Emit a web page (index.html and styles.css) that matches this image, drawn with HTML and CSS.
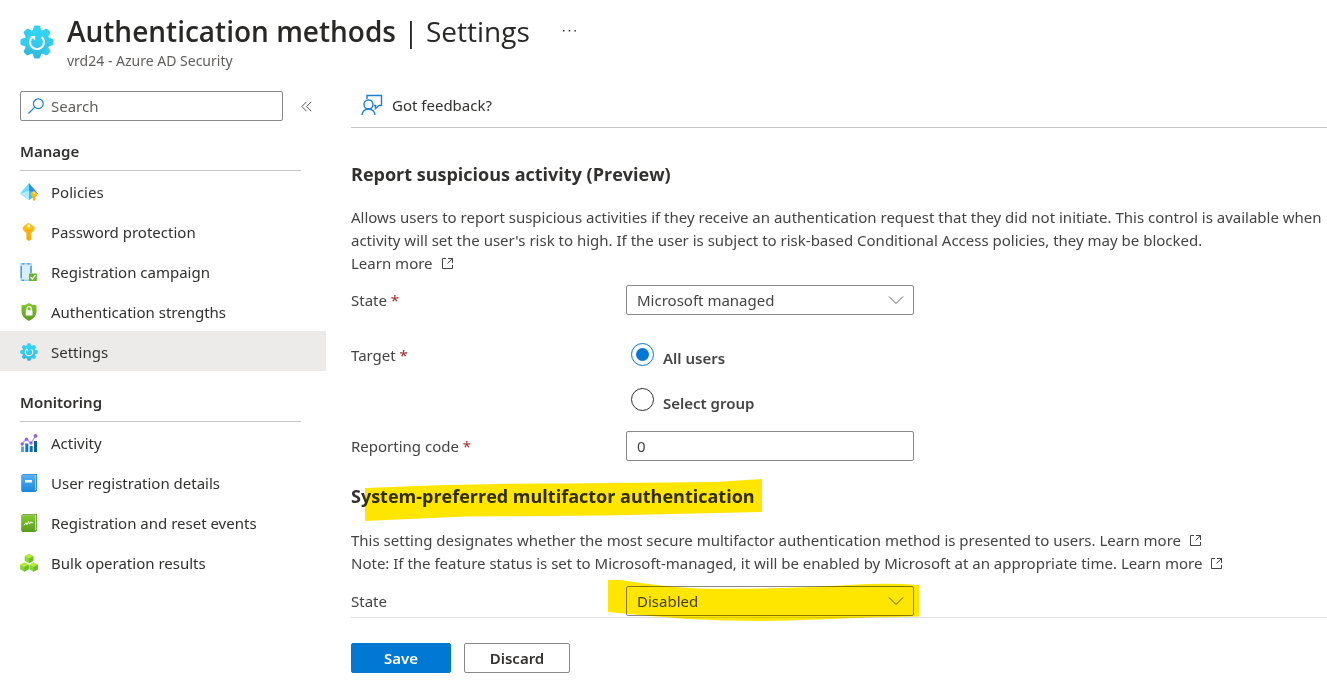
FILE: index.html
```html
<!DOCTYPE html>
<html lang="en">
<head>
<meta charset="utf-8">
<title>Authentication methods | Settings</title>
<link rel="stylesheet" href="styles.css">
</head>
<body>
<svg class="defs" aria-hidden="true">
  <defs>
    <linearGradient id="cyan" x1="0" y1="0" x2="0" y2="1"><stop offset="0" stop-color="#32d4f5"/><stop offset=".5" stop-color="#32cdf0"/><stop offset="1" stop-color="#2fb9dc"/></linearGradient>
    <linearGradient id="gold" x1="0" y1="0" x2="0" y2="1"><stop offset="0" stop-color="#ffc61a"/><stop offset="1" stop-color="#f9a80c"/></linearGradient>
    <linearGradient id="blue" x1="0" y1="0" x2="0" y2="1"><stop offset="0" stop-color="#4fb0f3"/><stop offset="1" stop-color="#1b86dc"/></linearGradient>
    <linearGradient id="green" x1="0" y1="0" x2="0" y2="1"><stop offset="0" stop-color="#83c92e"/><stop offset="1" stop-color="#5b9a20"/></linearGradient>
    <symbol id="gear" viewBox="0 0 34 34">
      <g fill="url(#cyan)">
        <circle cx="17" cy="17" r="12.6"/>
        <path id="teeth" d="M12.600 6 13.800 1.600Q14.200.5 15.200.5H18.800Q19.800.5 20.200 1.600L21.400 6ZM12.600 28 13.800 32.400Q14.200 33.500 15.200 33.500H18.800Q19.800 33.500 20.200 32.400L21.400 28ZM6 12.600 1.600 13.800Q.5 14.200.5 15.200V18.800Q.5 19.800 1.600 20.200L6 21.400ZM28 12.600 32.400 13.800Q33.500 14.200 33.500 15.200V18.800Q33.500 19.800 32.400 20.200L28 21.400Z"/>
        <use href="#teeth" transform="rotate(45 17 17)"/>
      </g>
      <path d="M12.300 12A7 7 0 1 0 21.700 12" fill="none" stroke="#fff" stroke-width="2"/>
      <path d="M10.400 11H15.200V15.600Z" fill="#fff"/>
    </symbol>
    <symbol id="external" viewBox="0 0 13 13">
      <path d="M5 1.5H1.5V11.5H11.5V8M7 1.5H11.5V6M11.5 1.5 6.500 6.500" fill="none" stroke="#444" stroke-width="1"/>
    </symbol>
    <symbol id="chevron" viewBox="0 0 16 10">
      <path d="M1 1.5 8 8.5 15 1.5" fill="none" stroke="#605e5c" stroke-width="1"/>
    </symbol>
  </defs>
</svg>

<header class="page-header">
  <svg class="page-icon" aria-hidden="true"><use href="#gear"/></svg>
  <div>
    <div class="title-row">
      <h1 class="title">Authentication methods<span class="title-section"> | Settings</span></h1>
      <button class="more" type="button" aria-label="More actions"><svg width="15" height="4" viewBox="0 0 15 4" aria-hidden="true"><path d="M1 1h1.500v1.500H1zM6.700 1h1.500v1.500h-1.500zM12.400 1h1.500v1.500h-1.500z" fill="#323130"/></svg></button>
    </div>
    <p class="subtitle">vrd24 - Azure AD Security</p>
  </div>
</header>

<div class="layout">
  <aside class="sidebar">
    <div class="search-row">
      <div class="search">
        <svg width="16" height="16" viewBox="0 0 16 16" aria-hidden="true"><g fill="none" stroke="#1a7fd6" stroke-width="1.200"><circle cx="10.300" cy="5.700" r="4.900"/><path d="M6.800 9.200.5 15.500"/></g></svg>
        <input class="search-input" type="search" placeholder="Search" aria-label="Search">
      </div>
      <button class="collapse" type="button" aria-label="Collapse menu"><svg width="11" height="11" viewBox="0 0 11 11" aria-hidden="true"><path d="M5.500.8.900 5.500l4.600 4.700M10.200.8 5.600 5.500l4.600 4.700" fill="none" stroke="#555" stroke-width="1"/></svg></button>
    </div>
    <nav>
      <h2 class="nav-heading">Manage</h2>
      <ul class="nav-list">
        <li><a class="nav-item" href="#"><svg class="nav-icon" viewBox="0 0 18 18" aria-hidden="true"><path d="M9 0 0 10.500 9 17z" fill="#6fdcf8"/><path d="M9 0 18 10.500 9 17z" fill="#2f8fdc"/><path d="M0 10.500 9 8v9z" fill="#a9effc"/><path d="M9 8 18 10.500 9 17z" fill="#4bb9ef"/><path d="M13.700 7.800 17 10.200v2.300l-1.600 1.700v2.600l-1.300 1.200-1.400-1.200v-2.600L11 12.500v-2.300z" fill="url(#gold)"/><circle cx="14" cy="10" r=".8" fill="#fff"/></svg>Policies</a></li>
        <li><a class="nav-item" href="#"><svg class="nav-icon" viewBox="0 0 18 18" aria-hidden="true"><path d="M7 .4Q8.500-.4 10 .4L14 3.400Q14.900 4.300 14.700 5.500L14 7.600 11.200 10.300V16.500L8.900 18 6.400 16.200V10.300L3.400 7.600 2.700 5.500Q2.500 4.300 3.300 3.400Z" fill="url(#gold)"/><circle cx="8.700" cy="2.900" r="1.500" fill="#fff"/><path d="M5.500 7.500h6.400M7.700 10v6" stroke="#f0a000" stroke-width=".7"/></svg>Password protection</a></li>
        <li><a class="nav-item" href="#"><svg class="nav-icon" viewBox="0 0 18 18" aria-hidden="true"><path d="M.7.500H11.500V17.500H.7z" fill="#d9eefb"/><path d="M1.200 0v18M11 0v10M1 .700h10M1 17.300h8" fill="none" stroke="#a5cff2" stroke-width="1.400"/><path d="M1.200 3v12M11 3v7M2.300.800h2M7.500.800h2M2 17.300h2" stroke="#3c94df" stroke-width="1.300"/><path d="M9 10.500h7.800V18H9z" fill="#66b32e"/><path d="m10.500 14.200 1.800 1.800 3.200-3.800" fill="none" stroke="#fff" stroke-width="1.200"/></svg>Registration campaign</a></li>
        <li><a class="nav-item" href="#"><svg class="nav-icon" viewBox="0 0 18 18" aria-hidden="true"><path d="M9 0Q12 2.200 16.500 2.200V9Q16.500 14 9 18 1.500 14 1.500 9V2.200Q6 2.200 9 0Z" fill="url(#green)"/><path d="M7 7.500V5.800a2.100 2.100 0 0 1 4.200 0v1.700" fill="none" stroke="#fff" stroke-width="1.300"/><rect x="5.700" y="7.300" width="6.800" height="5.200" rx=".6" fill="#fff"/></svg>Authentication strengths</a></li>
        <li><a class="nav-item selected" href="#" aria-current="page"><svg class="nav-icon" aria-hidden="true"><use href="#gear"/></svg>Settings</a></li>
      </ul>
      <h2 class="nav-heading">Monitoring</h2>
      <ul class="nav-list">
        <li><a class="nav-item" href="#"><svg class="nav-icon" viewBox="0 0 18 18" aria-hidden="true"><path d="M1 12.500h3V18H1z" fill="#5ea0ef"/><path d="M5.300 9.500h3V18h-3z" fill="#0078d4"/><path d="M9.700 12h3v6h-3z" fill="#1469b0"/><path d="M14 7h3v11h-3z" fill="#0b5f9f"/><path d="M2 10 6.300 5.200 11 9 15.500 2" fill="none" stroke="#b796f9" stroke-width="1.200"/><g fill="#9560e4"><circle cx="2.200" cy="10" r="1.700"/><circle cx="6.500" cy="5.200" r="1.700"/><circle cx="11" cy="9" r="1.700"/><circle cx="15.500" cy="1.900" r="1.900"/></g></svg>Activity</a></li>
        <li><a class="nav-item" href="#"><svg class="nav-icon" viewBox="0 0 18 18" aria-hidden="true"><path d="M3 0H17V16.500L15.300 18H2.500L1.500 17V1.500Z" fill="#1576cc"/><path d="M3 .8H16.200V15.800L15.200 16.700V1.500H2z" fill="#cce6fa"/><path d="M1.500 1.800h13.500V18H2.500l-1-1z" fill="url(#blue)"/><path d="M5 6h7v2.500H5z" fill="#fff"/></svg>User registration details</a></li>
        <li><a class="nav-item" href="#"><svg class="nav-icon" viewBox="0 0 18 18" aria-hidden="true"><path d="M3 0H17V16.500L15.300 18H2.500L1.500 17V1.500Z" fill="#5a9a22"/><path d="M3 .8H16.200V15.800L15.200 16.700V1.500H2z" fill="#d8efc0"/><path d="M1.500 1.800h13.500V18H2.500l-1-1z" fill="url(#green)"/><path d="M4 11.300 6 8.800 7 10.700 8.500 7.500 9.500 10 11 7.800 11.500 8.700H13" fill="none" stroke="#f2fbe8" stroke-width="1"/></svg>Registration and reset events</a></li>
        <li><a class="nav-item" href="#"><svg class="nav-icon" viewBox="0 0 18 18" aria-hidden="true"><g id="cube"><path d="M9 0 13.300 2.200V6.800L9 9.200 4.700 6.800V2.200Z" fill="#86d633"/><path d="M9 0 13.300 2.200 9 4.600 4.700 2.200Z" fill="#b4ec36"/><path d="M9 4.600 13.300 2.200V6.800L9 9.200Z" fill="#6dbb2a"/></g><use href="#cube" x="-4.600" y="8.500"/><use href="#cube" x="4.600" y="8.500"/></svg>Bulk operation results</a></li>
      </ul>
    </nav>
  </aside>

  <main class="content">
    <div class="toolbar">
      <button class="feedback" type="button">
        <svg width="22" height="22" viewBox="0 0 22 22" aria-hidden="true"><g fill="none" stroke="#1a7fd6" stroke-width="1.400"><circle cx="7.500" cy="10.500" r="4.500"/><path d="M1 21a6.500 6 0 0 1 13 0M6 5V1.500H20.500V11.500H18L14.500 14.500V11.500H12.800"/></g></svg>
        Got feedback?
      </button>
    </div>

    <form class="form">
      <section class="group">
        <h2 class="group-title">Report suspicious activity (Preview)</h2>
        <p class="description">Allows users to report suspicious activities if they receive an authentication request that they did not initiate. This control is available when<br>activity will set the user's risk to high. If the user is subject to risk-based Conditional Access policies, they may be blocked.<br><a class="learn" href="#">Learn more<svg class="external" aria-hidden="true"><use href="#external"/></svg></a></p>
        <div class="field">
          <label for="report-state">State <span class="required">*</span></label>
          <div class="select-box">
            <select id="report-state" class="control"><option>Microsoft managed</option></select>
            <svg class="chevron" aria-hidden="true"><use href="#chevron"/></svg>
          </div>
        </div>
        <div class="field target" role="radiogroup" aria-labelledby="target-label">
          <span id="target-label">Target <span class="required">*</span></span>
          <div class="radios">
            <label class="radio"><input type="radio" name="target" checked><span class="radio-text">All users</span></label>
            <label class="radio"><input type="radio" name="target"><span class="radio-text">Select group</span></label>
          </div>
        </div>
        <div class="field">
          <label for="code">Reporting code <span class="required">*</span></label>
          <input id="code" class="control" type="text" value="0">
        </div>
      </section>

      <section class="group preferred">
        <h2 class="group-title marked">System-preferred multifactor authentication
          <svg class="marker marker-title" viewBox="0 0 398 42" aria-hidden="true"><path d="M0 9Q100 4 200 4.500L350 3 397 0V33L240 36.500 100 37.500 0 42Z" fill="#ffe600"/></svg>
        </h2>
        <p class="description">This setting designates whether the most secure multifactor authentication method is presented to users. <a class="learn" href="#">Learn more<svg class="external" aria-hidden="true"><use href="#external"/></svg></a><br>Note: If the feature status is set to Microsoft-managed, it will be enabled by Microsoft at an appropriate time. <a class="learn" href="#">Learn more<svg class="external" aria-hidden="true"><use href="#external"/></svg></a></p>
        <div class="field">
          <label for="mfa-state">State</label>
          <div class="select-box">
            <select id="mfa-state" class="control"><option>Disabled</option></select>
            <svg class="chevron" aria-hidden="true"><use href="#chevron"/></svg>
            <svg class="marker marker-state" viewBox="0 0 311 42" aria-hidden="true"><path d="M0 0H12Q60 7 90 8.500 160 10 240 5 280 2.500 311 5V36.500Q260 37 210 39.500 150 42.500 80 39 40 36 0 32Z" fill="#ffe600"/></svg>
          </div>
        </div>
      </section>

      <footer class="actions">
        <button class="btn primary" type="submit">Save</button>
        <button class="btn secondary" type="button">Discard</button>
      </footer>
    </form>
  </main>
</div>
</body>
</html>
```

FILE: styles.css
```css
* {
  box-sizing: border-box;
}

body {
  margin: 0;
  background: #fff;
  color: #323130;
  font: 15px/20px "Noto Sans", "Open Sans", sans-serif;
}

h1, h2, p, ul {
  margin: 0;
  padding: 0;
}

ul {
  list-style: none;
}

a {
  color: inherit;
  text-decoration: none;
}

button, input, select {
  font: inherit;
  color: inherit;
}

.defs {
  position: absolute;
  width: 0;
  height: 0;
}

.page-header {
  display: flex;
  gap: 13px;
  padding: 11px 20px 20px;
}

.page-icon {
  width: 34px;
  height: 34px;
  margin-top: 14px;
}

.title-row {
  display: flex;
  align-items: center;
  gap: 26px;
}

.title {
  color: #292827;
  font-family: "Open Sans", "Noto Sans", sans-serif;
  font-size: 28px;
  line-height: 40px;
  font-weight: 600;
  white-space: nowrap;
}

.title-section {
  font-weight: 400;
}

.more, .collapse, .feedback {
  display: flex;
  align-items: center;
  border: 0;
  background: none;
}

.subtitle {
  color: #605e5c;
  font-size: 14px;
}

.layout {
  display: grid;
  grid-template-columns: 326px minmax(0, 1fr);
}

.search-row {
  display: flex;
  align-items: center;
  gap: 12px;
  padding-left: 20px;
}

.search {
  display: flex;
  align-items: center;
  gap: 7px;
  width: 263px;
  height: 30px;
  padding: 0 7px;
  border: 1px solid #8a8886;
  border-radius: 2px;
}

.search-input {
  flex: 1;
  min-width: 0;
  padding: 0;
  border: 0;
  outline: 0;
  background: none;
}

.search-input::placeholder {
  color: #605e5c;
  opacity: 1;
}

.nav-heading {
  margin: 0 25px 0 20px;
  padding: 20px 0 9px;
  border-bottom: 1px solid #c8c6c4;
  font-size: 15px;
  line-height: 20px;
  font-weight: 600;
}

.nav-list {
  padding-bottom: 1px;
}

.nav-item {
  display: flex;
  align-items: center;
  gap: 13px;
  height: 40px;
  padding: 2px 20px 0;
}

.nav-item.selected {
  background: #edebe9;
}

.nav-icon {
  width: 18px;
  height: 18px;
}

.content {
  padding-left: 25px;
  overflow: hidden;
}

.toolbar {
  height: 37px;
  padding: 3px 10px 0;
  border-bottom: 1px solid #c8c6c4;
}

.feedback {
  gap: 9px;
  padding: 0;
}

.group {
  padding-top: 34px;
}

.group-title {
  width: max-content;
  font-family: "Open Sans", "Noto Sans", sans-serif;
  font-size: 18px;
  line-height: 24px;
  font-weight: 700;
}

.description {
  padding: 20px 0 10px;
  color: #444;
  line-height: 23px;
  white-space: nowrap;
}

.external {
  width: 13px;
  height: 13px;
  margin-left: 8px;
  vertical-align: -1px;
}

.field {
  display: grid;
  grid-template-columns: 275px 288px;
  align-items: center;
}

.field label, .field > span, .control {
  color: #444;
}

.field .required {
  color: #a4262c;
}

.control {
  display: block;
  width: 100%;
  height: 30px;
  padding: 0 10px;
  border: 1px solid #8a8886;
  border-radius: 2px;
  background: #fff;
  appearance: none;
}

.select-box {
  position: relative;
}

.chevron {
  position: absolute;
  top: 10px;
  right: 10px;
  width: 16px;
  height: 10px;
  pointer-events: none;
}

.target {
  align-items: start;
  padding: 28px 0 17px;
}

.target > span {
  padding-top: 2px;
}

.radios {
  display: grid;
  gap: 19px;
  padding-left: 5px;
}

.radio {
  display: flex;
  gap: 9px;
  height: 26px;
  font-weight: 600;
}

.radio-text {
  padding-top: 5px;
}

.radio input {
  width: 23px;
  height: 23px;
  margin: 0;
  border: 1px solid #323130;
  border-radius: 50%;
  appearance: none;
}

.radio input:checked {
  padding: 4px;
  border-color: #0078d4;
  background: #0078d4 content-box;
}

.preferred {
  padding-top: 23px;
}

.preferred .description {
  padding: 21px 0 11px;
}

.marked {
  position: relative;
}

.marker {
  position: absolute;
  mix-blend-mode: multiply;
  pointer-events: none;
}

.marker-title {
  top: -5px;
  left: 14px;
  width: 398px;
  height: 42px;
}

.marker-state {
  top: -6px;
  left: -18px;
  width: 311px;
  height: 42px;
}

.actions {
  display: flex;
  gap: 13px;
  margin-top: 1px;
  padding: 25px 0 22px;
  border-top: 1px solid #e1dfdd;
}

.btn {
  height: 30px;
  padding: 0 24px;
  border: 1px solid #8a8886;
  border-radius: 2px;
  background: #fff;
  font-weight: 600;
}

.primary {
  min-width: 100px;
  border-color: #0078d4;
  background: #0078d4;
  color: #fff;
}

.secondary {
  min-width: 106px;
}
```
